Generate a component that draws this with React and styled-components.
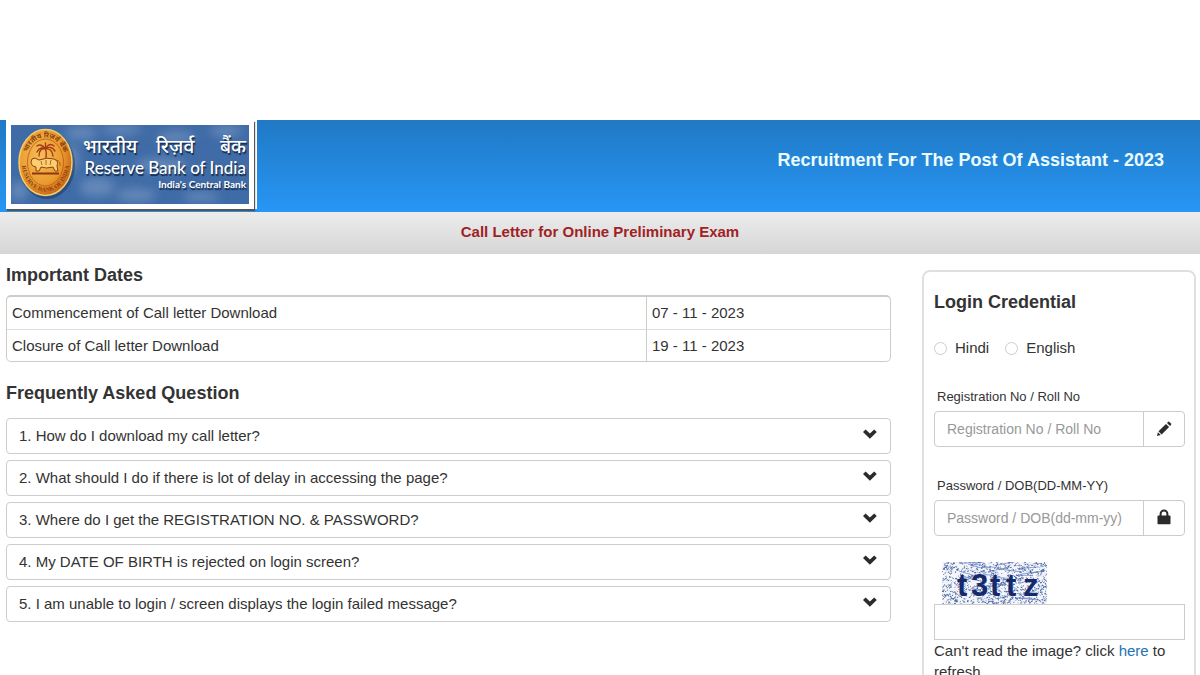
import React from "react";
import styled, { createGlobalStyle } from "styled-components";

const GlobalStyle = createGlobalStyle`
  *, *::before, *::after { box-sizing: border-box; }
  body {
    margin: 0;
    background: #fff;
    color: #333;
    font-family: "Liberation Sans", Arial, sans-serif;
    font-size: 15px;
    line-height: 20px;
    overflow-x: hidden;
  }
`;

const Page = styled.div`
  padding-top: 120px;
`;

const Header = styled.header`
  display: flex;
  justify-content: space-between;
  align-items: flex-start;
  height: 92px;
  padding: 0 36px 0 6px;
  background: linear-gradient(#2079c4, #2796f5);
`;

const LogoFrame = styled.a`
  display: block;
  padding: 5px;
  background: #fff;
  box-shadow: 1px 2px 1px #555, 3px 0 0 #fff;
`;

const LogoImage = styled.svg`
  display: block;
`;

const LogoText = styled.g`
  fill: #fff;
  font-family: Lato, "Noto Sans", sans-serif;
  text-shadow: 1px 2px 1px #13294d;
`;

const SiteTitle = styled.h1`
  margin: 28px 0 0;
  color: #eafcff;
  font-size: 18px;
  font-weight: 700;
  line-height: 24px;
`;

const NoticeBar = styled.div`
  height: 42px;
  padding-top: 10px;
  background: linear-gradient(#ececec, #d6d6d6);
  color: #a02226;
  font-weight: 700;
  text-align: center;
`;

const Content = styled.main`
  display: grid;
  grid-template-columns: 3fr 1fr;
  align-items: start;
`;

const Info = styled.div`
  padding: 9px 9px 0 6px;
`;

const Heading = styled.h2`
  margin: 0;
  font-size: 18px;
  font-weight: 700;
  line-height: 24px;
`;

const DatesTable = styled.table`
  width: 100%;
  margin: 8px 0 19px;
  border: 1px solid #ccc;
  border-top: 2px solid #ccc;
  border-radius: 5px;
  border-spacing: 0;

  th, td {
    height: 32px;
    padding: 0 5px;
    font-weight: 400;
    text-align: left;
  }
  td {
    width: 244px;
    border-left: 1px solid #ccc;
  }
  tr + tr > * { border-top: 1px solid #ddd; }
`;

const FaqList = styled.div`
  display: grid;
  gap: 6px;
  margin-top: 13px;
`;

const FaqItem = styled.button`
  display: flex;
  justify-content: space-between;
  align-items: center;
  height: 36px;
  padding: 0 13px 0 12px;
  border: 1px solid #ccc;
  border-radius: 4px;
  background: #fff;
  color: inherit;
  font: inherit;
  text-align: left;
  svg { margin-bottom: 4px; }
`;

const LoginColumn = styled.aside`
  padding: 16px 4px 0 22px;
`;

const LoginCard = styled.form`
  padding: 18px 9px 20px 10px;
  border: 2px solid #e0e0e0;
  border-radius: 8px;
`;

const LanguageChoice = styled.div`
  display: flex;
  gap: 16px;
  margin: 24px 0 29px;
`;

const RadioLabel = styled.label`
  display: flex;
  align-items: center;
  gap: 8px;
`;

const Radio = styled.input`
  appearance: none;
  width: 13px;
  height: 13px;
  margin: 0;
  border: 1px solid #ccc;
  border-radius: 50%;
  background: #fff;
`;

const Field = styled.div`
  display: flex;
  flex-direction: column;
  margin-bottom: 29px;
`;

const FieldLabel = styled.label`
  margin: 0 0 4px 3px;
  font-size: 13px;
  line-height: 20px;
`;

const InputGroup = styled.div`
  display: flex;
  height: 36px;
  border: 1px solid #ccc;
  border-radius: 4px;
`;

const GroupInput = styled.input`
  flex: 1;
  min-width: 0;
  padding: 0 12px;
  border: 0;
  background: transparent;
  color: #333;
  font: inherit;
  font-size: 14px;
  &::placeholder { color: #999; opacity: 1; }
`;

const Addon = styled.span`
  display: flex;
  align-items: center;
  justify-content: center;
  width: 41px;
  border-left: 1px solid #ccc;
`;

const Captcha = styled.svg`
  display: block;
  margin: -3px 0 0 8px;
`;

const CaptchaInput = styled.input`
  display: block;
  width: 100%;
  height: 36px;
  padding: 0 12px;
  border: 1px solid #ccc;
  font: inherit;
`;

const RefreshNote = styled.p`
  margin: 0;
  line-height: 21px;
  a { color: #2273b5; text-decoration: none; }
`;

const CHEVRON = "M2.6 0.4 6.9 4.6 11.2 0.4 13.8 3 6.9 9.8 0 3Z";

const Chevron = () => (
  <svg width="14" height="10" viewBox="0 0 14 10" aria-hidden="true">
    <path d={CHEVRON} fill="#2b2b2b" />
  </svg>
);

const Pencil = () => (
  <svg width="16" height="16" viewBox="0 0 16 16" fill="#2b2b2b" aria-hidden="true">
    <path d="M10 2.9 13.1 6 5.6 13.4 2.5 10.3Z" />
    <path d="M11 1.900 12.200 0.800Q12.800 .4 13.400 .9L15.100 2.600Q15.500 3.200 15.100 3.700L14 4.900Z" />
    <path d="M1.900 11.300 4.700 14.100 1 15.100Z" />
  </svg>
);

const Lock = () => (
  <svg width="14" height="18" viewBox="0 0 14 18" aria-hidden="true">
    <path d="M3.600 8V4.800a3.400 3.400 0 0 1 6.800 0V8" fill="none" stroke="#2b2b2b" strokeWidth="2" />
    <rect x="0.500" y="6.600" width="13" height="8.600" rx="0.800" fill="#2b2b2b" />
  </svg>
);

function makeRandom(seed) {
  let s = seed;
  return () => {
    s = (s * 16807) % 2147483647;
    return s / 2147483647;
  };
}

const rand = makeRandom(4271);
const SPECKS = Array.from({ length: 1100 }, () => {
  const x = (rand() * 105).toFixed(1);
  const y = (rand() * 42).toFixed(1);
  const dx = (rand() * 3 - 1).toFixed(1);
  const dy = (rand() * 2 - 1).toFixed(1);
  return `M${x} ${y}l${dx} ${dy}`;
}).join("");
const SCRATCHES = Array.from({ length: 34 }, () => {
  const x = (rand() * 85).toFixed(1);
  const y = (rand() * 42).toFixed(1);
  const dx = (rand() * 16 + 6).toFixed(1);
  const dy = (rand() * 12 - 6).toFixed(1);
  return `M${x} ${y}l${dx} ${dy}`;
}).join("");

const CaptchaImage = () => (
  <Captcha width="105" height="42" viewBox="0 0 105 42" role="img" aria-label="Captcha">
    <rect width="105" height="42" fill="#f3f5fb" />
    <path d={SPECKS} stroke="#49659f" strokeWidth="1" />
    <path d={SCRATCHES} stroke="#4c68b0" strokeWidth="0.6" />
    <text
      x="15 29 48 64 81"
      y="34"
      fill="#152a6b"
      fontFamily="'Liberation Sans Narrow', 'Liberation Sans', sans-serif"
      fontSize="31"
      fontWeight="700"
    >
      t3ttz
    </text>
  </Captcha>
);

const CLOUDS = [
  [70, 8, 16, 7], [110, 5, 20, 5], [165, 12, 18, 6], [215, 6, 16, 6], [86, 62, 18, 10],
  [125, 70, 20, 7], [190, 72, 18, 5], [60, 34, 8, 14], [150, 40, 26, 7], [8, 66, 9, 10],
];

const BankLogo = () => (
  <LogoImage width="238" height="79" viewBox="0 0 238 79" role="img" aria-label="Reserve Bank of India">
    <defs>
      <radialGradient id="gold" cx="0.4" cy="0.4" r="0.65">
        <stop offset="0" stopColor="#f5bd58" />
        <stop offset="0.65" stopColor="#eb9b2e" />
        <stop offset="1" stopColor="#c75f13" />
      </radialGradient>
      <filter id="cloud" x="-50%" y="-50%" width="200%" height="200%">
        <feGaussianBlur stdDeviation="5" />
      </filter>
      <path id="ringTop" d="M14.500 37.500A20 25 0 0 1 54.500 37.500" />
      <path id="ringBottom" d="M10.500 36A24 30.500 0 0 0 58.500 36" />
    </defs>
    <rect width="238" height="79" fill="#3f6ba6" />
    <g filter="url(#cloud)">
      {CLOUDS.map(([cx, cy, rx, ry]) => (
        <ellipse key={cx} cx={cx} cy={cy} rx={rx} ry={ry} fill="#7f9fc6" opacity="0.55" />
      ))}
    </g>
    <ellipse cx="36" cy="40" rx="28" ry="34" fill="#17345f" opacity="0.5" />
    <ellipse cx="34.500" cy="37.500" rx="26.500" ry="33" fill="url(#gold)" stroke="#f1cf6d" strokeWidth="1.500" />
    <ellipse cx="34.500" cy="37.500" rx="18" ry="23.500" fill="none" stroke="#b65a16" strokeWidth="0.800" />
    <g fill="#8a3d12" fontWeight="700">
      <text fontFamily="'Noto Sans', sans-serif" fontSize="7" textAnchor="middle">
        <textPath href="#ringTop" startOffset="50%">भारतीय रिज़र्व बैंक</textPath>
      </text>
      <text fontFamily="'Liberation Serif', serif" fontSize="6" textAnchor="middle">
        <textPath href="#ringBottom" startOffset="50%">RESERVE BANK OF INDIA</textPath>
      </text>
    </g>
    <path
      d="M35 33Q36 28 34.500 24M34.500 24Q29 21 26 27M34.500 24Q28 23 28 31M34.500 24Q40 20 44 26M34.500 24Q41 23 42 31M34.500 24Q30 18 26 21M34.500 24Q38 17 43 21M34.500 24V18"
      fill="none" stroke="#a33c16" strokeWidth="1.400" strokeLinecap="round"
    />
    <path
      d="M20 37Q20 33 24 33L28 35Q36 32 43 34Q48 36 46 41L47 46H44L42 42Q35 44 30 42L28 46H25L25 42Q20 41 20 37Z"
      fill="#f9cf72" stroke="#8f3d12" strokeWidth="1"
    />
    <path d="M45 35Q50 36 49 41M30 36L31 40M35 35V40M40 35L39 40" fill="none" stroke="#a14a16" strokeWidth="0.800" />
    <path d="M21 48.500H48" stroke="#8f3511" strokeWidth="2" />
    <LogoText>
      <g fontSize="19" fontWeight="500" fontFamily="'Noto Sans', sans-serif">
        <text x="72" y="28">भारतीय</text>
        <text x="145" y="28">रिज़र्व</text>
        <text x="209" y="28">बैंक</text>
      </g>
      <text x="235" y="49" fontSize="17" fontWeight="500" textAnchor="end">Reserve Bank of India</text>
      <text x="235" y="63" fontSize="10" fontWeight="700" textAnchor="end">India's Central Bank</text>
    </LogoText>
  </LogoImage>
);

const DATES = [
  ["Commencement of Call letter Download", "07 - 11 - 2023"],
  ["Closure of Call letter Download", "19 - 11 - 2023"],
];

const QUESTIONS = [
  "1. How do I download my call letter?",
  "2. What should I do if there is lot of delay in accessing the page?",
  "3. Where do I get the REGISTRATION NO. & PASSWORD?",
  "4. My DATE OF BIRTH is rejected on login screen?",
  "5. I am unable to login / screen displays the login failed message?",
];

export default function App() {
  return (
    <Page>
      <GlobalStyle />
      <Header>
        <LogoFrame href="#home"><BankLogo /></LogoFrame>
        <SiteTitle>Recruitment For The Post Of Assistant - 2023</SiteTitle>
      </Header>
      <NoticeBar>Call Letter for Online Preliminary Exam</NoticeBar>
      <Content>
        <Info>
          <Heading>Important Dates</Heading>
          <DatesTable>
            <tbody>
              {DATES.map(([name, date]) => (
                <tr key={name}>
                  <th scope="row">{name}</th>
                  <td>{date}</td>
                </tr>
              ))}
            </tbody>
          </DatesTable>
          <Heading>Frequently Asked Question</Heading>
          <FaqList>
            {QUESTIONS.map((q) => (
              <FaqItem key={q} type="button" aria-expanded="false">
                {q}
                <Chevron />
              </FaqItem>
            ))}
          </FaqList>
        </Info>
        <LoginColumn>
          <LoginCard>
            <Heading>Login Credential</Heading>
            <LanguageChoice role="radiogroup" aria-label="Language">
              <RadioLabel><Radio type="radio" name="language" value="hi" />Hindi</RadioLabel>
              <RadioLabel><Radio type="radio" name="language" value="en" />English</RadioLabel>
            </LanguageChoice>
            <Field>
              <FieldLabel htmlFor="registration">Registration No / Roll No</FieldLabel>
              <InputGroup>
                <GroupInput id="registration" type="text" placeholder="Registration No / Roll No" />
                <Addon><Pencil /></Addon>
              </InputGroup>
            </Field>
            <Field>
              <FieldLabel htmlFor="password">Password / DOB(DD-MM-YY)</FieldLabel>
              <InputGroup>
                <GroupInput id="password" type="password" placeholder="Password / DOB(dd-mm-yy)" />
                <Addon><Lock /></Addon>
              </InputGroup>
            </Field>
            <CaptchaImage />
            <CaptchaInput type="text" aria-label="Captcha text" />
            <RefreshNote>
              Can't read the image? click <a href="#refresh">here</a> to refresh.
            </RefreshNote>
          </LoginCard>
        </LoginColumn>
      </Content>
    </Page>
  );
}
